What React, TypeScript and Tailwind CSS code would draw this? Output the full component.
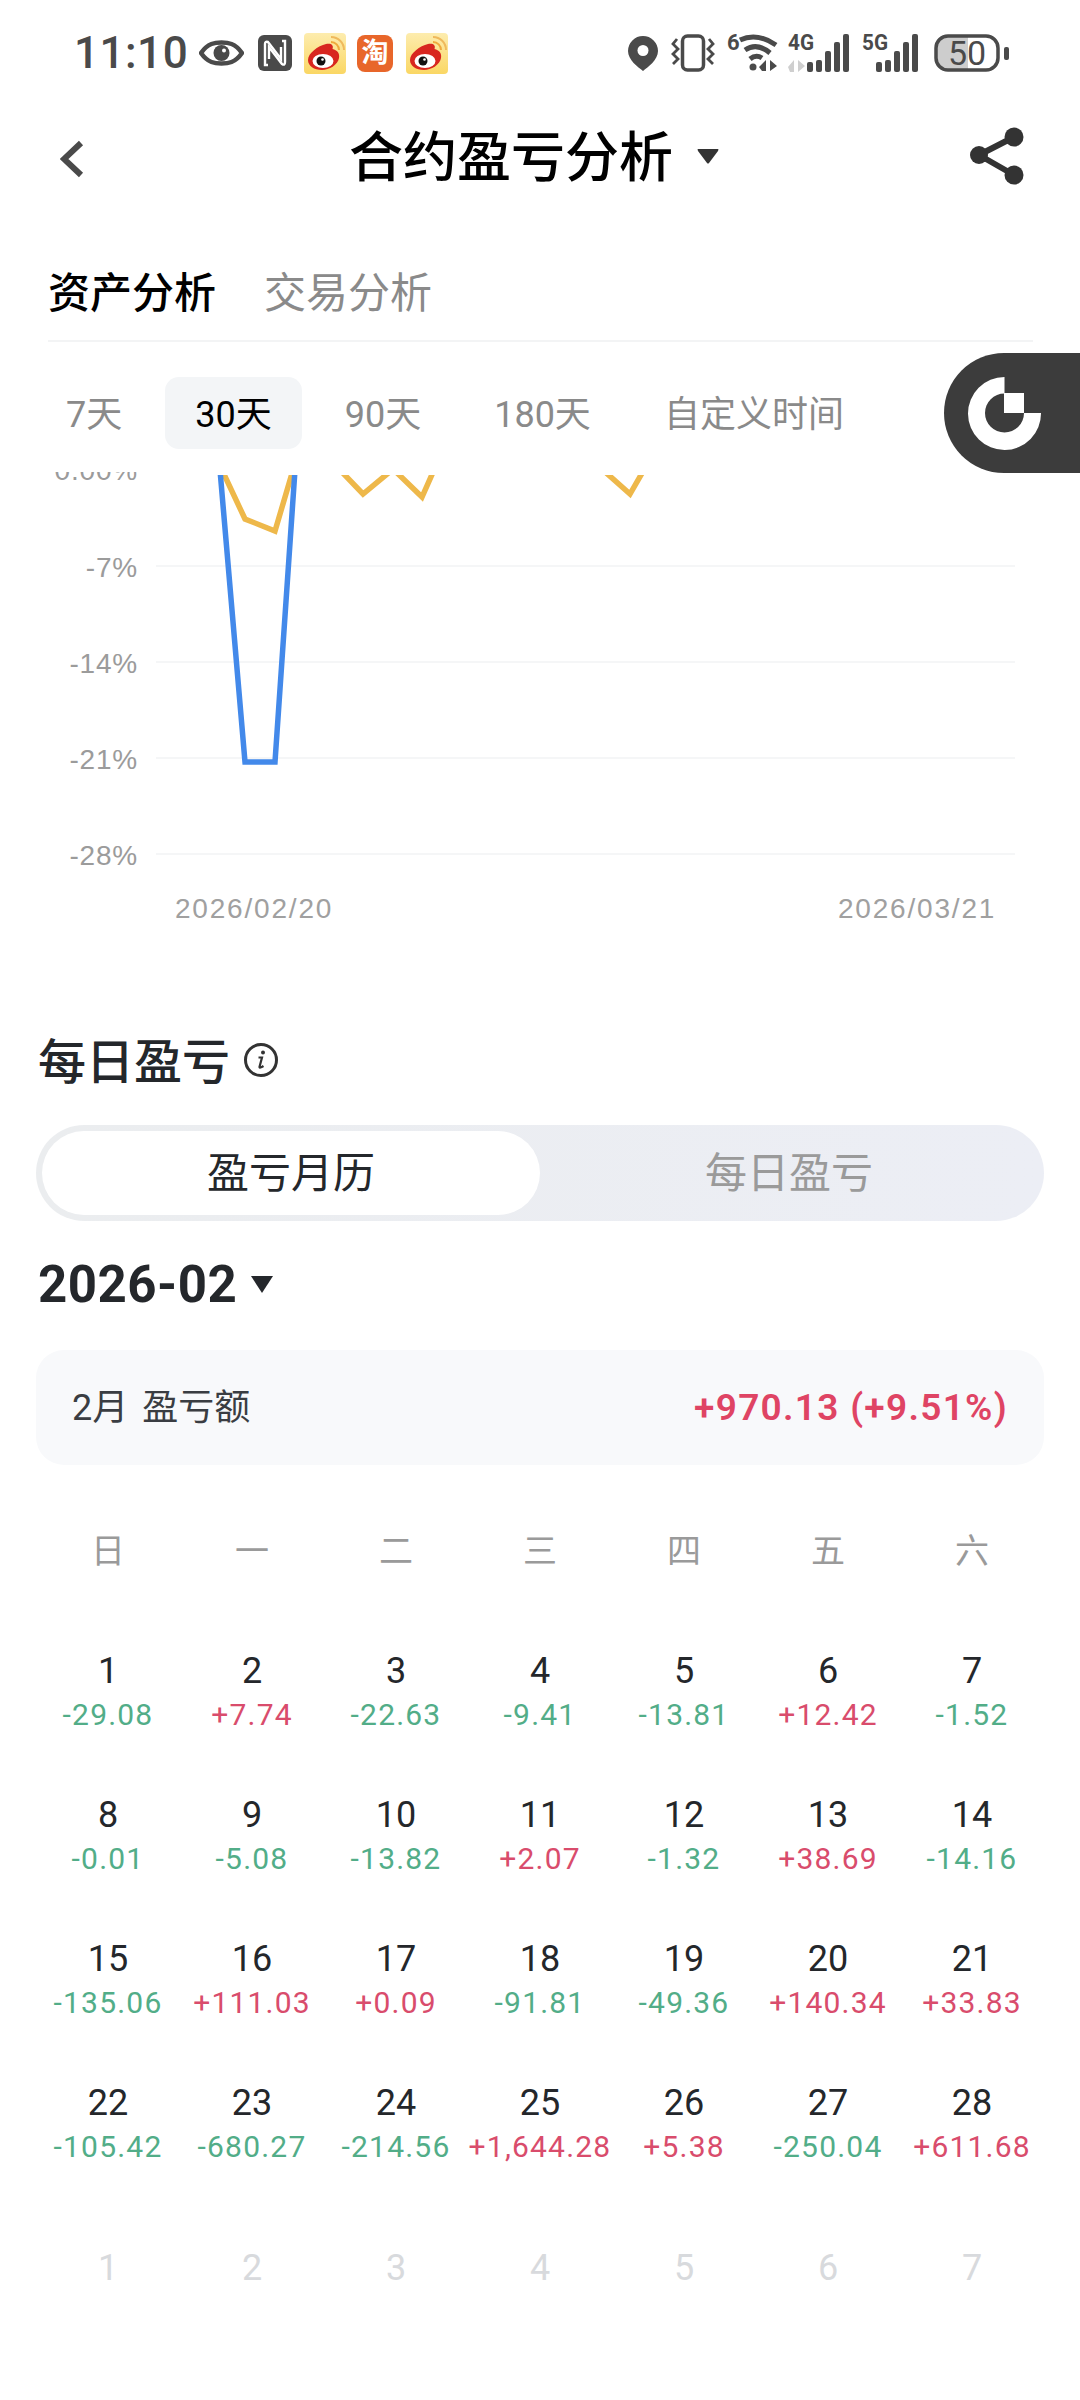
import React from 'react';

const WEEK = ['日', '一', '二', '三', '四', '五', '六'];

const DAYS = [
  ['1', '-29.08'], ['2', '+7.74'], ['3', '-22.63'], ['4', '-9.41'], ['5', '-13.81'], ['6', '+12.42'], ['7', '-1.52'],
  ['8', '-0.01'], ['9', '-5.08'], ['10', '-13.82'], ['11', '+2.07'], ['12', '-1.32'], ['13', '+38.69'], ['14', '-14.16'],
  ['15', '-135.06'], ['16', '+111.03'], ['17', '+0.09'], ['18', '-91.81'], ['19', '-49.36'], ['20', '+140.34'], ['21', '+33.83'],
  ['22', '-105.42'], ['23', '-680.27'], ['24', '-214.56'], ['25', '+1,644.28'], ['26', '+5.38'], ['27', '-250.04'], ['28', '+611.68'],
];

const GRID = [
  { y: 566, label: '-7%' },
  { y: 662, label: '-14%' },
  { y: 758, label: '-21%' },
  { y: 854, label: '-28%' },
];

function Eye() {
  return (
    <svg width="45" height="26" viewBox="0 0 45 26">
      <path d="M2 13 C9 3 16 2.500 22.500 2.500 C29 2.500 36 3 43 13 C36 23 29 23.500 22.500 23.500 C16 23.500 9 23 2 13Z" fill="none" stroke="#4a4a4a" strokeWidth="4.500" />
      <circle cx="22.500" cy="13" r="8" fill="#4a4a4a" />
      <circle cx="25" cy="10.500" r="2" fill="#fff" />
    </svg>
  );
}

function Nfc() {
  return (
    <svg width="34" height="36" viewBox="0 0 34 36">
      <rect width="34" height="36" rx="6" fill="#4a4a4a" />
      <path d="M10 30 L7 30 L7 9 Q7 6 10 7 L23 24 L23 12" fill="none" stroke="#fff" strokeWidth="2.400" />
      <path d="M11 24 L11 12 L24 29 Q27 31 27 27 L27 6 L24 6" fill="none" stroke="#fff" strokeWidth="2.400" />
    </svg>
  );
}

function Weibo() {
  return (
    <svg width="42" height="41" viewBox="0 0 42 41">
      <defs>
        <linearGradient id="wb" x1="0" y1="0" x2="0" y2="1">
          <stop offset="0" stopColor="#fdecae" />
          <stop offset="1" stopColor="#fad764" />
        </linearGradient>
      </defs>
      <rect width="42" height="41" rx="4" fill="url(#wb)" />
      <path d="M27 9 A8 8 0 0 1 35 17" fill="none" stroke="#efa93c" strokeWidth="2" />
      <path d="M27 4 A13 13 0 0 1 40 17" fill="none" stroke="#efb95c" strokeWidth="2" />
      <path d="M4 27 C4 20 14 13 22 11 C27 10 30 12 28.500 16 C33 17 36 20 35 25 C34 32 25 37 18 37 C10 37 4 33 4 27Z" fill="#d8261f" />
      <ellipse cx="19" cy="28" rx="10.500" ry="7" fill="#fff" />
      <circle cx="17" cy="28" r="4.500" fill="#111" />
      <circle cx="18.500" cy="26.500" r="1.300" fill="#fff" />
    </svg>
  );
}

function Pin() {
  return (
    <svg width="30" height="35" viewBox="0 0 30 35">
      <path d="M15 0 A15 15 0 0 1 30 15 C30 24 20 31 15 35 C10 31 0 24 0 15 A15 15 0 0 1 15 0Z" fill="#4a4a4a" />
      <circle cx="15" cy="14.500" r="5.500" fill="#fff" />
    </svg>
  );
}

function Vibrate() {
  return (
    <svg width="44" height="38" viewBox="0 0 44 38">
      <rect x="11.500" y="2" width="21" height="34" rx="5" fill="none" stroke="#4a4a4a" strokeWidth="3.500" />
      <path d="M6 5 L2 10 L7 15 L2 20 L7 25 L2 30" fill="none" stroke="#4a4a4a" strokeWidth="2.800" />
      <path d="M38 5 L42 10 L37 15 L42 20 L37 25 L42 30" fill="none" stroke="#4a4a4a" strokeWidth="2.800" />
    </svg>
  );
}

// the status texts need headroom, so these svgs start 8px above the icon row
function Wifi() {
  return (
    <svg width="51" height="46" viewBox="0 -8 51 46">
      <text x="0" y="16" fontSize="22" fontWeight="700" fill="#4a4a4a">6</text>
      <path d="M13 6 Q30 -2 49 11" fill="none" stroke="#4a4a4a" strokeWidth="5" />
      <path d="M18 16 Q30 8 43 19" fill="none" stroke="#4a4a4a" strokeWidth="5" />
      <path d="M23 25 Q29 20 35 24" fill="none" stroke="#4a4a4a" strokeWidth="5" />
      <circle cx="26" cy="33" r="3.500" fill="#4a4a4a" />
      <path d="M39 26 L39 37 L35 37 L32 33Z M43 26 L43 37 L50 32Z" fill="#4a4a4a" />
    </svg>
  );
}

function Signal({ label, arrows }: { label: string; arrows?: boolean }) {
  const tops = [28, 26, 17, 8, 0];
  const barX = arrows ? 19 : 14;
  const w = arrows ? 62 : 56;
  return (
    <svg width={w} height="46" viewBox={`0 -8 ${w} 46`}>
      <text x="0" y="16" fontSize="22" fontWeight="700" textLength="26" lengthAdjust="spacingAndGlyphs" fill="#4a4a4a">{label}</text>
      {arrows && <path d="M6 26 L6 38 L2 38 L0 33Z M10 26 L10 38 L17 32Z" fill="#cfcfcf" />}
      {tops.map((t, i) => (
        <rect key={i} x={barX + i * 9} y={t} width="6" height={38 - t} rx="2" fill="#4a4a4a" />
      ))}
    </svg>
  );
}

function Battery() {
  return (
    <svg width="76" height="38" viewBox="0 0 76 38">
      <path d="M14 2 H34 V36 H14 A12 12 0 0 1 2 24 V14 A12 12 0 0 1 14 2Z" fill="#cdcdcd" />
      <rect x="2" y="2" width="62" height="34" rx="12" fill="none" stroke="#4a4a4a" strokeWidth="3.500" />
      <text x="33" y="31" textAnchor="middle" fontSize="34" fill="#4a4a4a">50</text>
      <rect x="70" y="13" width="5" height="13" rx="2" fill="#4a4a4a" />
    </svg>
  );
}

function Badge() {
  return (
    <div className="absolute left-[944px] top-[353px] w-[136px] h-[120px] bg-[#3c3c3c] rounded-l-[60px]">
      <svg width="136" height="120" viewBox="0 0 136 120">
        <path d="M60.500 24 A36.500 36.500 0 1 0 97 60 L80 60 A19.500 19.500 0 1 1 60.500 40.500Z" fill="#fff" />
        <rect x="60" y="40" width="20" height="20" fill="#fff" />
      </svg>
    </div>
  );
}

function Chart() {
  const axis = "'Liberation Sans', sans-serif";
  return (
    <svg width="1080" height="528" viewBox="0 472 1080 528" className="block">
      <text x="138" y="480" textAnchor="end" fontSize="28" letterSpacing="0.800" fill="#9b9b9b" fontFamily={axis}>0.00%</text>
      {GRID.map((g) => (
        <g key={g.y}>
          <line x1="156" x2="1015" y1={g.y} y2={g.y} stroke="#f2f3f4" strokeWidth="1.500" />
          <text x="138" y={g.y + 11} textAnchor="end" fontSize="28" letterSpacing="0.800" fill="#9b9b9b" fontFamily={axis}>{g.label}</text>
        </g>
      ))}
      <clipPath id="plot">
        <rect x="150" y="475" width="900" height="420" />
      </clipPath>
      <g clipPath="url(#plot)" fill="none" strokeWidth="5.500" strokeLinejoin="miter">
        <polyline points="222,470 245,519 275,531 293,470" stroke="#eeb84a" />
        <polyline points="340,470 363,494 392,470" stroke="#eeb84a" />
        <polyline points="392,468 422,497 434,470" stroke="#eeb84a" />
        <polyline points="603,470 630,494 645,468" stroke="#eeb84a" />
        <polyline points="220,470 245,762 275,762 295,470" stroke="#4389ea" />
      </g>
      <text x="175" y="918" fontSize="28" letterSpacing="1.800" fill="#a0a0a0" fontFamily={axis}>2026/02/20</text>
      <text x="838" y="918" fontSize="28" letterSpacing="1.800" fill="#a0a0a0" fontFamily={axis}>2026/03/21</text>
    </svg>
  );
}

export default function App() {
  return (
    <div className="relative w-[1080px] h-[2400px] bg-white overflow-hidden font-[Roboto,'Noto_Sans_CJK_SC',sans-serif]">
      {/* Status bar */}
      <div className="h-[104px] flex items-center pl-[74px] pt-[2px]">
        <span className="w-[125px] text-[44px] font-medium text-[#4a4a4a] tracking-[0.5px] leading-none">11:10</span>
        <Eye />
        <div className="ml-[14px]"><Nfc /></div>
        <div className="ml-[12px]"><Weibo /></div>
        <div className="ml-[11px] w-[36px] h-[37px] rounded-[8px] bg-[#e8662a] flex items-center justify-center text-white text-[27px] font-bold leading-none">淘</div>
        <div className="ml-[13px]"><Weibo /></div>
        <div className="ml-[180px]"><Pin /></div>
        <div className="ml-[13px]"><Vibrate /></div>
        <div className="ml-[12px] -mt-[8px]"><Wifi /></div>
        <div className="ml-[10px] -mt-[8px]"><Signal label="4G" arrows /></div>
        <div className="ml-[12px] -mt-[8px]"><Signal label="5G" /></div>
        <div className="ml-[16px]"><Battery /></div>
      </div>

      {/* Title bar */}
      <div className="h-[104px] flex items-center">
        <svg width="24" height="40" viewBox="0 0 24 40" className="ml-[60px] mt-[6px]">
          <path d="M21 4 L4 20 L21 36" fill="none" stroke="#4a4a4a" strokeWidth="6" />
        </svg>
        <h1 className="ml-[265px] pt-[6px] w-[322px] text-[54px] font-medium text-black whitespace-nowrap leading-none">合约盈亏分析</h1>
        <svg width="22" height="15" viewBox="0 0 22 15" className="ml-[26px]">
          <path d="M1 0 H21 Q22 0 21 2 L12 14 Q11 15 10 14 L1 2 Q0 0 1 0Z" fill="#333" />
        </svg>
        <svg width="55" height="58" viewBox="0 0 55 58" className="ml-[250px]">
          <path d="M45 10 L10 28 L45 48" fill="none" stroke="#333" strokeWidth="6" />
          <circle cx="45" cy="10" r="9.500" fill="#333" />
          <circle cx="10" cy="28" r="9" fill="#333" />
          <circle cx="45" cy="48" r="9.500" fill="#333" />
        </svg>
      </div>

      {/* Tabs */}
      <div className="mx-[48px] w-[985px] h-[134px] pt-[40px] flex items-center gap-[48px] border-b-2 border-[#f3f4f5] text-[42px] leading-none">
        <span className="font-medium text-black">资产分析</span>
        <span className="text-[#8a8a8a]">交易分析</span>
      </div>

      {/* Period */}
      <div className="h-[130px] pt-[35px] pl-[36px] flex items-start gap-[13px] text-[36px] text-[#8a8a8a]">
        <span className="h-[72px] px-[30px] pt-[3px] flex items-center">7天</span>
        <span className="h-[72px] px-[30px] pt-[3px] flex items-center rounded-[14px] bg-[#f3f5f7] text-black">30天</span>
        <span className="h-[72px] px-[30px] pt-[3px] flex items-center">90天</span>
        <span className="h-[72px] px-[30px] pt-[3px] flex items-center">180天</span>
        <span className="h-[72px] px-[30px] pt-[3px] flex items-center">自定义时间</span>
      </div>

      <Chart />

      {/* Daily PnL */}
      <div className="h-[125px] pt-[1px] pl-[38px] flex items-center text-[48px] font-medium text-[#24272b] leading-none">
        每日盈亏
        <svg width="36" height="36" viewBox="0 0 36 36" className="ml-[13px] -mt-[6px]">
          <circle cx="18" cy="18" r="15.500" fill="none" stroke="#333" strokeWidth="3" />
          <circle cx="20" cy="10.500" r="2" fill="#333" />
          <path d="M15.500 15.500 H19 L16.500 25 Q16.500 26.500 20.500 24" fill="none" stroke="#333" strokeWidth="2.200" />
        </svg>
      </div>

      <div className="ml-[36px] w-[1008px] h-[96px] p-[6px] flex rounded-full bg-[linear-gradient(to_right,#ebedef,#eceef5)] text-[42px] leading-none">
        <div className="w-[498px] pt-[2px] rounded-full bg-white flex items-center justify-center text-[#24272b]">盈亏月历</div>
        <div className="flex-1 pt-[2px] flex items-center justify-center text-[#9a9a9a]">每日盈亏</div>
      </div>

      <div className="h-[129px] pb-[3px] pl-[38px] flex items-center">
        <span className="text-[51px] font-bold text-[#24272b] tracking-[0.5px] leading-none">2026-02</span>
        <svg width="22" height="17" viewBox="0 0 22 17" className="ml-[14px]">
          <path d="M0 0 H22 L11 17Z" fill="#24272b" />
        </svg>
      </div>

      <div className="ml-[36px] w-[1008px] h-[115px] px-[36px] flex items-center justify-between rounded-[28px] bg-[#f8f9fb]">
        <span className="text-[36px] text-[#3a3d42] [word-spacing:5px]">2月 盈亏额</span>
        <span className="text-[37px] font-semibold text-[#df4464] tracking-[1.3px]">+970.13 (+9.51%)</span>
      </div>

      {/* Calendar */}
      <div className="ml-[36px] w-[1008px] pt-[64px] mb-[76px] grid grid-cols-7 text-[34px] text-[#9a9a9a] leading-[44px] text-center">
        {WEEK.map((w) => <span key={w}>{w}</span>)}
      </div>

      <div className="ml-[36px] w-[1008px] grid grid-cols-7 auto-rows-[144px]">
        {DAYS.map(([d, v]) => (
          <div key={d} className="flex flex-col items-center">
            <span className="h-[44px] flex items-center text-[36px] text-[#24272b] leading-none">{d}</span>
            <span className={`h-[44px] flex items-center text-[30px] tracking-[1.2px] leading-none whitespace-nowrap ${v.startsWith('+') ? 'text-[#d94c6c]' : 'text-[#52ad88]'}`}>{v}</span>
          </div>
        ))}
        {['1', '2', '3', '4', '5', '6', '7'].map((d) => (
          <div key={d} className="h-[86px] flex items-center justify-center text-[36px] text-[#d8dadd] leading-none">{d}</div>
        ))}
      </div>

      <Badge />
    </div>
  );
}
